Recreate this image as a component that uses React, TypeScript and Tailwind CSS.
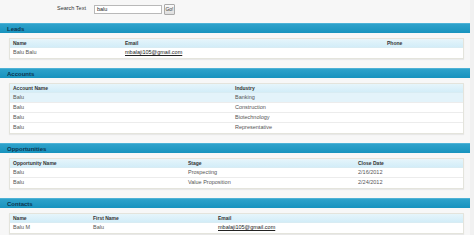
import React from 'react';

type Col = { label: string; w: string };
type Cell = string | { link: string };

const sections: { title: string; cols: Col[]; rows: Cell[][]; hot?: number }[] = [
  {
    title: 'Leads',
    cols: [
      { label: 'Name', w: 'w-[112px]' },
      { label: 'Email', w: 'w-[262px]' },
      { label: 'Phone', w: '' },
    ],
    rows: [['Balu Balu', { link: 'mbalaji105@gmail.com' }, '']],
  },
  {
    title: 'Accounts',
    cols: [
      { label: 'Account Name', w: 'w-[222px]' },
      { label: 'Industry', w: '' },
    ],
    rows: [
      ['Balu', 'Banking'],
      ['Balu', 'Construction'],
      ['Balu', 'Biotechnology'],
      ['Balu', 'Representative'],
    ],
    hot: 0,
  },
  {
    title: 'Opportunities',
    cols: [
      { label: 'Opportunity Name', w: 'w-[175px]' },
      { label: 'Stage', w: 'w-[170px]' },
      { label: 'Close Date', w: '' },
    ],
    rows: [
      ['Balu', 'Prospecting', '2/16/2012'],
      ['Balu', 'Value Proposition', '2/24/2012'],
    ],
  },
  {
    title: 'Contacts',
    cols: [
      { label: 'Name', w: 'w-[80px]' },
      { label: 'First Name', w: 'w-[125px]' },
      { label: 'Email', w: '' },
    ],
    rows: [['Balu M', 'Balu', { link: 'mbalaji105@gmail.com' }]],
  },
];

function Section({ title, cols, rows, hot }: (typeof sections)[number]) {
  return (
    <div>
      <div className="h-[10px] bg-gradient-to-b from-[#2ea2cb] to-[#1793be] border-t border-[#4db2d6] pl-[7px] flex items-center text-[6px] font-bold text-[#0b3550] leading-none">
        {title}
      </div>
      <div className="pl-[9px] pr-[6px] pt-[5px] pb-[9px]">
        <div className="border border-[#e4e4dc] bg-white shadow-[0_1px_1px_rgba(0,0,0,0.06)]">
          <div className="flex h-[9px] items-center bg-gradient-to-b from-[#e6f5fb] to-[#d3edf8] border-b border-[#d8ecf3] text-[5px] font-bold text-[#333]">
            {cols.map((c, i) => (
              <div key={i} className={`${c.w || 'flex-1'} shrink-0 pl-[3px]`}>{c.label}</div>
            ))}
          </div>
          {rows.map((r, ri) => (
            <div
              key={ri}
              className={`flex h-[10px] items-center text-[5.5px] text-[#555] ${ri < rows.length - 1 ? 'border-b border-[#ececec]' : ''} ${ri === hot ? 'bg-[#e3f3fa]' : ''}`}
            >
              {r.map((cell, ci) => (
                <div key={ci} className={`${cols[ci].w || 'flex-1'} shrink-0 pl-[3px]`}>
                  {typeof cell === 'string' ? cell : <span className="underline text-[#222]">{cell.link}</span>}
                </div>
              ))}
            </div>
          ))}
        </div>
      </div>
    </div>
  );
}

export default function App() {
  return (
    <div className="w-[474px] h-[235px] overflow-hidden bg-[#f1f1f1] font-['Liberation_Sans',Arial,sans-serif] leading-none">
      <div className="w-[470px] bg-[#f7f7f7]">
        <div className="h-[23px] flex items-start pt-[5px]">
          <span className="ml-[57px] text-[5.5px] text-[#333] mt-[1px]">Search Text</span>
          <div className="ml-[8px] w-[68px] h-[9px] border border-[#b9b9b9] bg-white text-[5.5px] text-[#222] pl-[2px] flex items-center">balu</div>
          <button className="ml-[2px] w-[11px] h-[11px] -mt-[1px] border border-[#aaa] rounded-[1px] bg-gradient-to-b from-[#fafafa] to-[#dedede] text-[5px] text-[#333] flex items-center justify-center p-0">Go!</button>
        </div>
        {sections.map(s => (
          <Section key={s.title} {...s} />
        ))}
      </div>
    </div>
  );
}
